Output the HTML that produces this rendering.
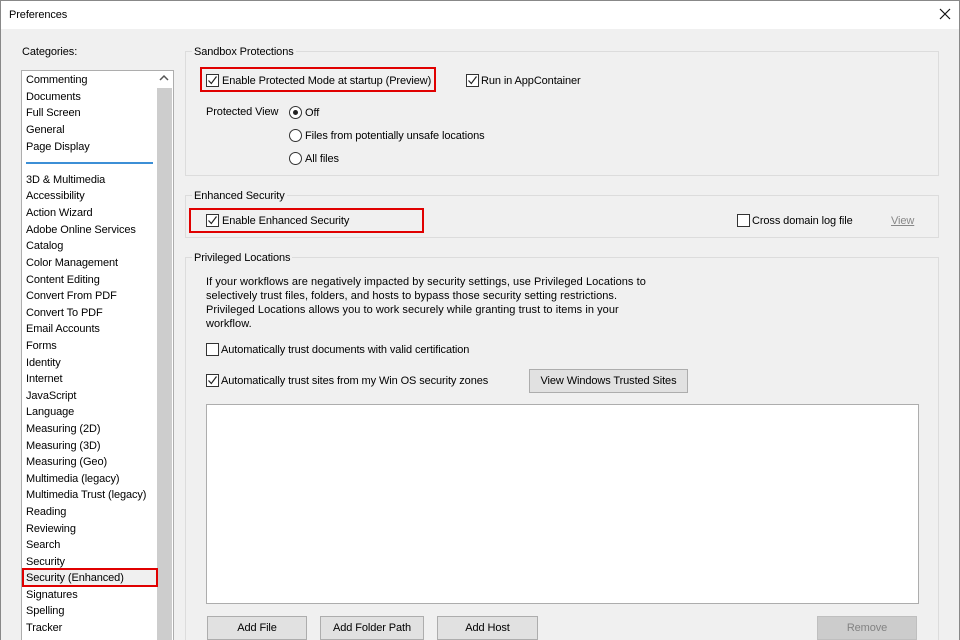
<!DOCTYPE html>
<html style="width:960px;height:640px;overflow:hidden"><head><meta charset="utf-8"><style>
*{margin:0;padding:0;box-sizing:border-box}
body{width:960px;height:640px;overflow:hidden;background:#f0f0f0;font-family:"Liberation Sans",sans-serif;font-size:11px;letter-spacing:-0.1px;color:#000;position:relative}
.a{position:absolute;white-space:nowrap}
.t{margin-top:1px}
.frame{position:absolute;border:1px solid #dcdcdc;}
.title{position:absolute;background:#f0f0f0;padding:0 2px;font-size:11px;margin-top:1px}
.cb{position:absolute;width:13px;height:13px;border:1px solid #333;background:#fff}
.cb svg{position:absolute;left:0;top:0}
.rb{position:absolute;width:13px;height:13px;border:1px solid #333;border-radius:50%;background:#fff}
.btn{position:absolute;height:24px;background:#e1e1e1;border:1px solid #adadad;text-align:center;line-height:23px;font-size:11px}
.red{position:absolute;border:2px solid #e00000}
.li{position:absolute;left:26px;font-size:11px;margin-top:1px}
</style></head><body>
<div class="a" style="left:0;top:0;width:960px;height:29px;background:#fff;border:1px solid #888;border-bottom:none"></div>
<div class="a" style="left:0;top:29px;width:1px;height:611px;background:#888"></div>
<div class="a" style="left:959px;top:0;width:1px;height:640px;background:#888"></div>
<div class="a t" style="left:9px;top:8px">Preferences</div>
<svg class="a" style="left:939px;top:8px" width="12" height="12"><path d="M1 1L11 11M11 1L1 11" stroke="#111" stroke-width="1.2"/></svg>

<div class="a t" style="left:22px;top:45px">Categories:</div>
<div class="a" style="left:21px;top:70px;width:153px;height:580px;background:#fff;border:1px solid #adadad"></div>
<div class="a" style="left:157px;top:88px;width:15px;height:560px;background:#cdcdcd"></div>
<svg class="a" style="left:159px;top:74px" width="10" height="8"><path d="M1 6L5 2L9 6" stroke="#555" stroke-width="1.5" fill="none"/></svg>
<div class="a" style="left:26px;top:162px;width:127px;height:2px;background:#3c8fd6"></div>
<div class="li" style="top:73px">Commenting</div>
<div class="li" style="top:90px">Documents</div>
<div class="li" style="top:106px">Full Screen</div>
<div class="li" style="top:123px">General</div>
<div class="li" style="top:140px">Page Display</div>
<div class="li" style="top:173px">3D &amp; Multimedia</div>
<div class="li" style="top:189px">Accessibility</div>
<div class="li" style="top:206px">Action Wizard</div>
<div class="li" style="top:223px">Adobe Online Services</div>
<div class="li" style="top:239px">Catalog</div>
<div class="li" style="top:256px">Color Management</div>
<div class="li" style="top:273px">Content Editing</div>
<div class="li" style="top:289px">Convert From PDF</div>
<div class="li" style="top:306px">Convert To PDF</div>
<div class="li" style="top:322px">Email Accounts</div>
<div class="li" style="top:339px">Forms</div>
<div class="li" style="top:356px">Identity</div>
<div class="li" style="top:372px">Internet</div>
<div class="li" style="top:389px">JavaScript</div>
<div class="li" style="top:405px">Language</div>
<div class="li" style="top:422px">Measuring (2D)</div>
<div class="li" style="top:439px">Measuring (3D)</div>
<div class="li" style="top:455px">Measuring (Geo)</div>
<div class="li" style="top:472px">Multimedia (legacy)</div>
<div class="li" style="top:488px">Multimedia Trust (legacy)</div>
<div class="li" style="top:505px">Reading</div>
<div class="li" style="top:522px">Reviewing</div>
<div class="li" style="top:538px">Search</div>
<div class="li" style="top:555px">Security</div>
<div class="a" style="left:23px;top:569px;width:134px;height:17px;background:#f0f0f0"></div>
<div class="li" style="top:571px">Security (Enhanced)</div>
<div class="red" style="left:22px;top:568px;width:136px;height:19px"></div>
<div class="li" style="top:588px">Signatures</div>
<div class="li" style="top:604px">Spelling</div>
<div class="li" style="top:621px">Tracker</div>

<!-- Sandbox -->
<div class="frame" style="left:185px;top:51px;width:754px;height:125px"></div>
<div class="title" style="left:192px;top:45px">Sandbox Protections</div>
<div class="red" style="left:200px;top:67px;width:236px;height:25px"></div>
<div class="cb" style="left:206px;top:74px"><svg width="11" height="11"><path d="M1.5 5.5L4.3 8.5L9.5 1.5" stroke="#222" stroke-width="1.2" fill="none"/></svg></div>
<div class="a t" style="left:222px;top:74px">Enable Protected Mode at startup (Preview)</div>
<div class="cb" style="left:466px;top:74px"><svg width="11" height="11"><path d="M1.5 5.5L4.3 8.5L9.5 1.5" stroke="#222" stroke-width="1.2" fill="none"/></svg></div>
<div class="a t" style="left:481px;top:74px">Run in AppContainer</div>
<div class="a t" style="left:206px;top:105px">Protected View</div>
<div class="rb" style="left:289px;top:106px"><div style="position:absolute;left:3px;top:3px;width:5px;height:5px;border-radius:50%;background:#222"></div></div>
<div class="a t" style="left:305px;top:106px">Off</div>
<div class="rb" style="left:289px;top:129px"></div>
<div class="a t" style="left:305px;top:129px">Files from potentially unsafe locations</div>
<div class="rb" style="left:289px;top:152px"></div>
<div class="a t" style="left:305px;top:152px">All files</div>

<!-- Enhanced -->
<div class="frame" style="left:185px;top:195px;width:754px;height:43px"></div>
<div class="title" style="left:192px;top:189px">Enhanced Security</div>
<div class="red" style="left:189px;top:208px;width:235px;height:25px"></div>
<div class="cb" style="left:206px;top:214px"><svg width="11" height="11"><path d="M1.5 5.5L4.3 8.5L9.5 1.5" stroke="#222" stroke-width="1.2" fill="none"/></svg></div>
<div class="a t" style="left:222px;top:214px">Enable Enhanced Security</div>
<div class="cb" style="left:737px;top:214px"></div>
<div class="a t" style="left:752px;top:214px">Cross domain log file</div>
<div class="a t" style="left:891px;top:214px;color:#888;text-decoration:underline">View</div>

<!-- Privileged -->
<div class="frame" style="left:185px;top:257px;width:754px;height:400px"></div>
<div class="title" style="left:192px;top:251px">Privileged Locations</div>
<div class="a" style="left:206px;top:275px;font-size:11px;letter-spacing:0.05px;line-height:14px">If your workflows are negatively impacted by security settings, use Privileged Locations to<br>selectively trust files, folders, and hosts to bypass those security setting restrictions.<br>Privileged Locations allows you to work securely while granting trust to items in your<br>workflow.</div>
<div class="cb" style="left:206px;top:343px"></div>
<div class="a t" style="left:221px;top:343px">Automatically trust documents with valid certification</div>
<div class="cb" style="left:206px;top:374px"><svg width="11" height="11"><path d="M1.5 5.5L4.3 8.5L9.5 1.5" stroke="#222" stroke-width="1.2" fill="none"/></svg></div>
<div class="a t" style="left:221px;top:374px">Automatically trust sites from my Win OS security zones</div>
<div class="btn" style="left:529px;top:369px;width:159px">View Windows Trusted Sites</div>
<div class="a" style="left:206px;top:404px;width:713px;height:200px;background:#fff;border:1px solid #adadad"></div>
<div class="btn" style="left:207px;top:616px;width:100px">Add File</div>
<div class="btn" style="left:320px;top:616px;width:104px">Add Folder Path</div>
<div class="btn" style="left:437px;top:616px;width:101px">Add Host</div>
<div class="btn" style="left:817px;top:616px;width:100px;background:#cccccc;border-color:#bfbfbf;color:#838383">Remove</div>
</body></html>
